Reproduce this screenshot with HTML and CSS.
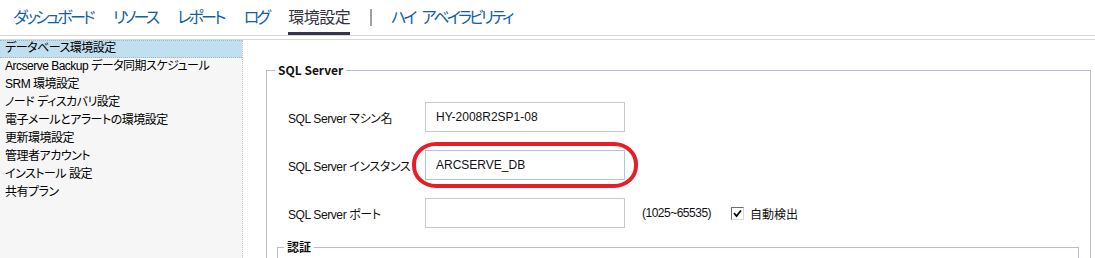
FILE: index.html
```html
<!DOCTYPE html>
<html lang="ja">
<head>
    <meta charset="UTF-8">
    <title>環境設定 - データベース環境設定</title>
    <link rel="stylesheet" href="styles.css">
</head>
<body>
    <div class="nav">
        <a class="tab">ダッシュボード</a>
        <a class="tab">リソース</a>
        <a class="tab">レポート</a>
        <a class="tab">ログ</a>
        <a class="tab active">環境設定</a>
        <span class="sep"></span>
        <a class="tab">ハイ アベイラビリティ</a>
    </div>

    <div class="main">
        <ul class="side">
            <li class="selected">データベース環境設定</li>
            <li>Arcserve Backup データ同期スケジュール</li>
            <li>SRM 環境設定</li>
            <li>ノード ディスカバリ設定</li>
            <li>電子メールとアラートの環境設定</li>
            <li>更新環境設定</li>
            <li>管理者アカウント</li>
            <li>インストール 設定</li>
            <li>共有プラン</li>
        </ul>

        <div class="content">
            <fieldset class="group">
                <legend>SQL Server</legend>

                <div class="row">
                    <label class="label">SQL Server マシン名</label>
                    <input class="field" type="text" value="HY-2008R2SP1-08">
                </div>

                <div class="row">
                    <label class="label">SQL Server インスタンス</label>
                    <div class="field-wrap">
                        <input class="field focused" type="text" value="ARCSERVE_DB">
                        <span class="mark"></span>
                    </div>
                </div>

                <div class="row last">
                    <label class="label">SQL Server ポート</label>
                    <input class="field" type="text" value="">
                    <span class="range">(1025~65535)</span>
                    <span class="check">
                        <svg width="9" height="9" viewBox="0 0 9 9"><polyline points="1,4 3.5,7 8,1.5" fill="none" stroke="#000" stroke-width="1.8"/></svg>
                    </span>
                    <span class="check-label">自動検出</span>
                </div>

                <fieldset class="group inner">
                    <legend>認証</legend>
                </fieldset>
            </fieldset>
        </div>
    </div>
</body>
</html>
```

FILE: styles.css
```css
body {
    margin: 0;
    width: 1095px;
    height: 258px;
    overflow: hidden;
    background: #fff;
    font-family: "Liberation Sans", "Noto Sans CJK JP", sans-serif;
    font-size: 12px;
    color: #111;
}
.nav {
    display: flex;
    align-items: flex-start;
    padding-left: 13px;
    border-bottom: 1px solid #d3d7dc;
    box-sizing: border-box;
    height: 36px;
    font-family: "Noto Sans CJK JP", sans-serif;
    font-feature-settings: "palt";
    font-size: 16px;
}
.tab {
    color: #1160ab;
    margin-right: 20px;
    height: 35px;
    line-height: 33px;
    box-sizing: border-box;
    letter-spacing: -2.8px;
    word-spacing: 6px;
    white-space: nowrap;
    cursor: pointer;
}
.tab.active {
    color: #33333f;
    border-bottom: 3px solid #36344a;
    letter-spacing: -0.5px;
}
.sep {
    width: 2px;
    height: 17px;
    margin: 9px 19px 0 0;
    background: #a0a0a0;
}
.main {
    display: flex;
    margin-top: 3px;
    border-top: 1px solid #d3d7dc;
    height: 218px;
    overflow: hidden;
}
.side {
    list-style: none;
    margin: 0;
    padding: 0;
    width: 242px;
    flex: none;
    background: #f6f6f6;
    border-right: 1px dotted #c4c4c4;
    font-feature-settings: "palt";
}
.side li {
    height: 18px;
    line-height: 17px;
    padding-left: 5px;
    white-space: nowrap;
    letter-spacing: -0.5px;
    color: #000;
}
.side li.selected {
    background: #c0dff1;
    border-top: 1px dotted #a9b4bd;
    border-bottom: 1px dotted #a9b4bd;
    height: 16px;
    line-height: 15px;
}
.content {
    flex: 1;
    padding: 23px 4px 0 23px;
}
.group {
    margin: 0;
    padding: 25px 0 0 21px;
    border: 1px solid #b9bcca;
    border-bottom: none;
    min-width: 0;
}
.group legend {
    margin-left: -13px;
    padding: 0 3px;
    font-weight: bold;
    font-size: 12px;
    line-height: 14px;
    font-family: "Noto Sans CJK JP", sans-serif;
}
.group.inner legend {
    margin-left: 6px;
}
.row {
    display: flex;
    align-items: center;
    height: 30px;
    margin-bottom: 18px;
}
.row.last {
    margin-bottom: 12px;
}
.label {
    width: 137px;
    flex: none;
    white-space: nowrap;
    letter-spacing: -0.4px;
    font-feature-settings: "palt";
}
.field {
    width: 200px;
    height: 30px;
    box-sizing: border-box;
    border: 1px solid #c9c9c9;
    padding: 0 10px;
    font-family: "Liberation Sans", sans-serif;
    font-size: 12px;
    color: #111;
    outline: none;
}
.field.focused {
    border-color: #a6c9e8;
}
.field-wrap {
    position: relative;
    height: 30px;
}
.mark {
    position: absolute;
    left: -13px;
    top: -8px;
    width: 226px;
    height: 46px;
    box-sizing: border-box;
    border: 4px solid #e61e28;
    border-radius: 24px / 22px;
}
.range {
    margin-left: 17px;
    letter-spacing: -0.5px;
}
.check {
    margin-left: 20px;
    width: 13px;
    height: 13px;
    box-sizing: border-box;
    border: 1px solid #6e6e6e;
    border-right-color: #d8d8d8;
    border-bottom-color: #d8d8d8;
    background: #fff;
    display: flex;
    align-items: center;
    justify-content: center;
}
.check-label {
    margin-left: 6px;
}
.group.inner {
    margin: 0 11px 0 -11px;
    padding: 0;
    height: 40px;
}
```
